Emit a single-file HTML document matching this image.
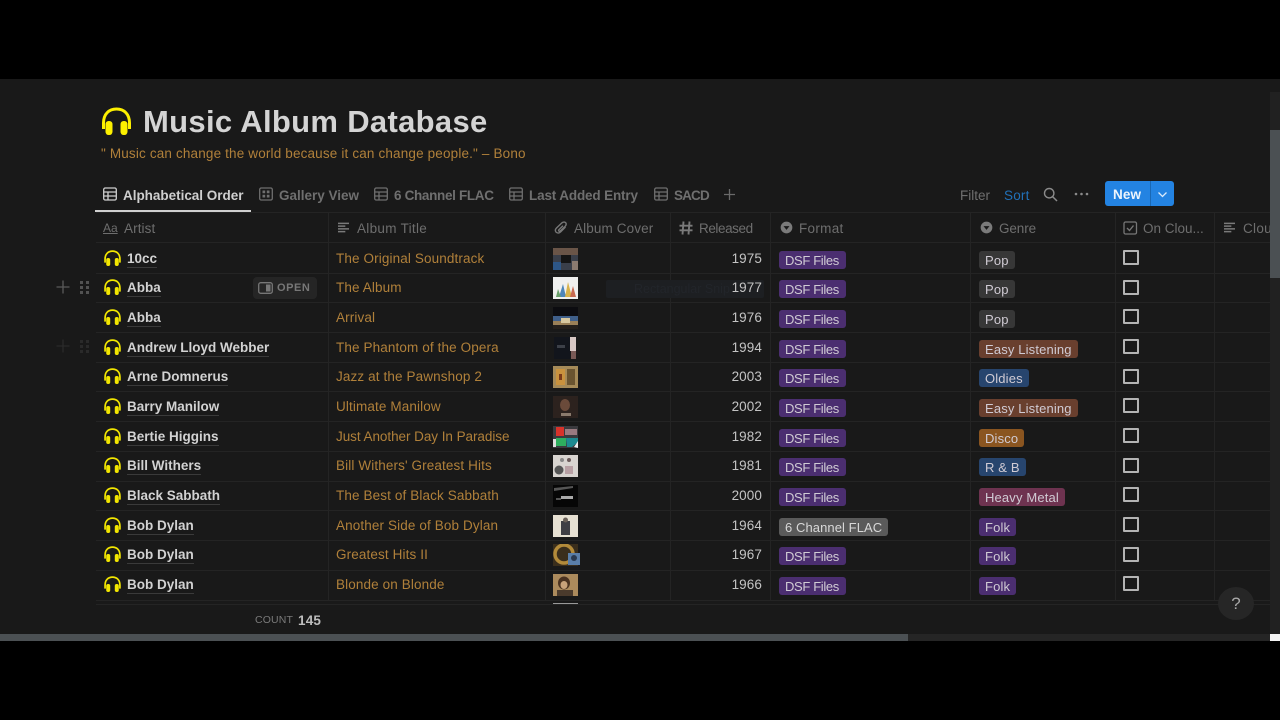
<!DOCTYPE html>
<html><head><meta charset="utf-8"><title>Music Album Database</title>
<style>
*{box-sizing:border-box}
html,body{margin:0;width:1280px;height:720px;overflow:hidden;background:#000;font-family:"Liberation Sans",sans-serif}
#p{position:absolute;left:0;top:79px;width:1280px;height:562px;background:#191919;overflow:hidden}
#w{position:absolute;left:0;top:0;width:1280px;height:720px;filter:blur(.25px)}
.a{position:absolute;white-space:nowrap}
.t{position:absolute;top:187px;font-size:13.5px;line-height:18px;color:#6f6f6f;font-weight:700;letter-spacing:0;white-space:nowrap}
.th{position:absolute;top:220px;font-size:13.5px;line-height:18px;color:#6e6e6e;letter-spacing:.25px;white-space:nowrap}
.l{position:absolute;background:#242424}
.r{position:absolute;left:96px;width:1174px;height:30px}
.r svg.h{position:absolute;left:7px;top:6px;width:19px;height:16px;color:#f2e600}
.n{position:absolute;left:31px;top:6px;font-size:13.5px;line-height:18px;font-weight:700;color:#d2d2d2;letter-spacing:0;border-bottom:1px solid #3a3a3a;height:18px;white-space:nowrap}
.b{position:absolute;left:240px;top:6px;font-size:13.5px;line-height:18px;color:#b0803a;letter-spacing:.12px;white-space:nowrap}
.c{position:absolute;left:457px;top:4px;width:25px;height:22px;display:block}
.y{position:absolute;right:508px;top:6px;font-size:13.5px;line-height:18px;color:#c4c4c4;letter-spacing:.1px}
.g{position:absolute;top:7px;height:18px;border-radius:3px;padding:0 6px;font-size:13px;line-height:19px;color:#d0cbd4;letter-spacing:.15px;white-space:nowrap}
.f{left:683px;background:#4b2e70;width:67px;letter-spacing:-.35px}
.s{left:883px}
.x{position:absolute;left:1027px;top:6.500px;width:16px;height:15px;border:2px solid #b4b4b4;border-radius:1px}
</style></head><body>
<svg width="0" height="0" style="position:absolute"><defs>
<symbol id="h" viewBox="0 0 33 28"><path d="M3.500 22V16C3.500 7 9 2 16.500 2S29.500 7 29.500 16V22" fill="none" stroke="currentColor" stroke-width="3"/><rect x="5.500" y="14" width="7" height="14" rx="3.200" fill="currentColor"/><rect x="20.500" y="14" width="7" height="14" rx="3.200" fill="currentColor"/></symbol>
<symbol id="ti" viewBox="0 0 14 14"><rect x=".7" y="1" width="12.600" height="12" rx="1.500" fill="none" stroke="currentColor" stroke-width="1.300"/><path d="M1 5H13M1 9H13M5 5V13" stroke="currentColor" stroke-width="1.300" fill="none"/></symbol>
<symbol id="ga" viewBox="0 0 14 14"><rect x=".7" y="1" width="12.600" height="12" rx="1.500" fill="none" stroke="currentColor" stroke-width="1.300"/><path d="M3.500 3.500H6.200V6.200H3.500ZM7.800 3.500H10.500V6.200H7.800ZM3.500 7.800H6.200V10.500H3.500ZM7.800 7.800H10.500V10.500H7.800Z" fill="currentColor"/></symbol>
<symbol id="tx" viewBox="0 0 14 12"><path d="M1 1.500H13M1 4.500H9M1 7.500H13M1 10.500H9" stroke="currentColor" stroke-width="1.600" fill="none"/></symbol>
<symbol id="dd" viewBox="0 0 14 14"><circle cx="7" cy="7" r="6.300" fill="currentColor"/><path d="M3.800 5.500H10.200L7 9.500Z" fill="#191919"/></symbol>
</defs></svg>
<div id="p"></div>
<div id="w">
<!-- scrollbars -->
<div class="a" style="left:1270px;top:92px;width:10px;height:542px;background:#212121"></div>
<div class="a" style="left:1270px;top:130px;width:10px;height:148px;background:#4b5053"></div>
<div class="a" style="left:0;top:634px;width:1270px;height:7px;background:#252525"></div>
<div class="a" style="left:0;top:634px;width:908px;height:7px;background:#4b5053"></div>
<div class="a" style="left:1270px;top:634px;width:10px;height:7px;background:#f4f4f4"></div>

<!-- title -->
<svg class="a" style="left:100px;top:107px;width:33px;height:28px;color:#fdf000"><use href="#h"/></svg>
<div class="a" style="left:143px;top:104px;font-size:31px;line-height:36px;font-weight:700;color:#d4d4d4;letter-spacing:.32px">Music Album Database</div>
<div class="a" style="left:101px;top:145px;font-size:13.500px;line-height:18px;color:#b0803a;letter-spacing:.16px">" Music can change the world because it can change people." – Bono</div>

<!-- tabs -->
<svg class="a" style="left:103px;top:187px;width:14px;height:14px;color:#cfcfcf"><use href="#ti"/></svg>
<div class="t" style="left:123px;color:#cfcfcf;letter-spacing:-.02px">Alphabetical Order</div>
<div class="a" style="left:95px;top:210px;width:156px;height:2px;background:#d0d0d0"></div>
<svg class="a" style="left:259px;top:187px;width:14px;height:14px;color:#6f6f6f"><use href="#ga"/></svg>
<div class="t" style="left:279px">Gallery View</div>
<svg class="a" style="left:374px;top:187px;width:14px;height:14px;color:#6f6f6f"><use href="#ti"/></svg>
<div class="t" style="left:394px;letter-spacing:-.33px">6 Channel FLAC</div>
<svg class="a" style="left:509px;top:187px;width:14px;height:14px;color:#6f6f6f"><use href="#ti"/></svg>
<div class="t" style="left:529px;letter-spacing:-.15px">Last Added Entry</div>
<svg class="a" style="left:654px;top:187px;width:14px;height:14px;color:#6f6f6f"><use href="#ti"/></svg>
<div class="t" style="left:674px;letter-spacing:-.85px">SACD</div>
<svg class="a" style="left:723px;top:188px;width:13px;height:13px"><path d="M6.500 1V12M1 6.500H12" stroke="#6a6a6a" stroke-width="1.300"/></svg>

<div class="a" style="left:960px;top:187px;font-size:13.500px;line-height:18px;color:#6f6f6f;letter-spacing:0">Filter</div>
<div class="a" style="left:1004px;top:187px;font-size:13.500px;line-height:18px;color:#2170b8;letter-spacing:.2px">Sort</div>
<svg class="a" style="left:1043px;top:187px;width:15px;height:15px"><circle cx="6.200" cy="6.200" r="4.700" fill="none" stroke="#8a8a8a" stroke-width="1.400"/><path d="M9.600 9.600L14 14" stroke="#8a8a8a" stroke-width="1.500"/></svg>
<svg class="a" style="left:1074px;top:191px;width:15px;height:6px"><circle cx="2" cy="3" r="1.300" fill="#8a8a8a"/><circle cx="7.500" cy="3" r="1.300" fill="#8a8a8a"/><circle cx="13" cy="3" r="1.300" fill="#8a8a8a"/></svg>
<div class="a" style="left:1105px;top:181px;width:69px;height:25px;border-radius:3px;background:#2383e2"></div>
<div class="a" style="left:1150px;top:181px;width:1px;height:25px;background:#1a68b4"></div>
<div class="a" style="left:1113px;top:186px;font-size:13.500px;line-height:18px;font-weight:700;color:#eef5fc;letter-spacing:.1px">New</div>
<svg class="a" style="left:1157px;top:191px;width:11px;height:7px"><path d="M1.500 1.500L5.500 5.500L9.500 1.500" fill="none" stroke="#dbeafa" stroke-width="1.300"/></svg>

<!-- grid lines -->
<div class="l" style="left:96px;top:212px;width:1174px;height:1px"></div>
<div class="l" style="left:328px;top:212px;width:1px;height:388px"></div>
<div class="l" style="left:545px;top:212px;width:1px;height:388px"></div>
<div class="l" style="left:670px;top:212px;width:1px;height:388px"></div>
<div class="l" style="left:770px;top:212px;width:1px;height:388px"></div>
<div class="l" style="left:970px;top:212px;width:1px;height:388px"></div>
<div class="l" style="left:1115px;top:212px;width:1px;height:388px"></div>
<div class="l" style="left:1214px;top:212px;width:1px;height:388px"></div>
<div class="l" style="left:96px;top:242px;width:1174px;height:1px"></div>
<div class="l" style="left:96px;top:273px;width:1174px;height:1px"></div>
<div class="l" style="left:96px;top:302px;width:1174px;height:1px"></div>
<div class="l" style="left:96px;top:332px;width:1174px;height:1px"></div>
<div class="l" style="left:96px;top:362px;width:1174px;height:1px"></div>
<div class="l" style="left:96px;top:391px;width:1174px;height:1px"></div>
<div class="l" style="left:96px;top:421px;width:1174px;height:1px"></div>
<div class="l" style="left:96px;top:451px;width:1174px;height:1px"></div>
<div class="l" style="left:96px;top:481px;width:1174px;height:1px"></div>
<div class="l" style="left:96px;top:510px;width:1174px;height:1px"></div>
<div class="l" style="left:96px;top:540px;width:1174px;height:1px"></div>
<div class="l" style="left:96px;top:570px;width:1174px;height:1px"></div>
<div class="l" style="left:96px;top:600px;width:1174px;height:1px"></div>
<div class="l" style="left:96px;top:604px;width:1174px;height:1px"></div>

<!-- header -->
<div class="a" style="left:103px;top:220px;font-size:12px;line-height:16px;color:#6e6e6e;text-decoration:underline;letter-spacing:0">Aa</div>
<div class="th" style="left:124px;letter-spacing:.1px">Artist</div>
<svg class="a" style="left:337px;top:222px;width:13px;height:11px;color:#7a7a7a"><use href="#tx"/></svg>
<div class="th" style="left:357px;letter-spacing:.3px">Album Title</div>
<svg class="a" style="left:554px;top:221px;width:14px;height:14px"><path d="M11.500 6L6.500 11C4.800 12.700 2.500 12 1.800 10.800C1 9.500 1.500 8 2.500 7L8 1.800C9.500 .5 11.500 1 12 2.200C12.500 3.500 12 4.500 11 5.500L6.200 10C5.300 10.800 4 9.700 4.800 8.800L9 4.800" fill="none" stroke="#777" stroke-width="1.400"/></svg>
<div class="th" style="left:574px;letter-spacing:.12px">Album Cover</div>
<svg class="a" style="left:679px;top:221px;width:14px;height:14px"><path d="M4.500 .5L3.500 13.500M10.500 .5L9.500 13.500M.5 4.700H13.500M.5 9.300H13.500" stroke="#7a7a7a" stroke-width="1.900" fill="none"/></svg>
<div class="th" style="left:699px;letter-spacing:-.42px">Released</div>
<svg class="a" style="left:780px;top:221px;width:13px;height:13px;color:#7a7a7a"><use href="#dd"/></svg>
<div class="th" style="left:799px;letter-spacing:.3px">Format</div>
<svg class="a" style="left:980px;top:221px;width:13px;height:13px;color:#7a7a7a"><use href="#dd"/></svg>
<div class="th" style="left:999px;letter-spacing:-.1px">Genre</div>
<svg class="a" style="left:1123px;top:221px;width:15px;height:14px"><rect x="1" y="1" width="12.500" height="12" rx="1.500" fill="none" stroke="#777" stroke-width="1.300"/><path d="M4 7L6.500 9.500L10.500 4.500" fill="none" stroke="#777" stroke-width="1.400"/></svg>
<div class="th" style="left:1143px;letter-spacing:0">On Clou...</div>
<svg class="a" style="left:1223px;top:222px;width:13px;height:11px;color:#7a7a7a"><use href="#tx"/></svg>
<div class="a" style="left:1243px;top:220px;width:27px;overflow:hidden;font-size:13.500px;line-height:18px;color:#6e6e6e;letter-spacing:.3px">Cloud</div>

<!-- hover controls -->
<svg class="a" style="left:56px;top:280px;width:14px;height:14px"><path d="M7 .5V13.500M.5 7H13.500" stroke="#5a5a5a" stroke-width="1.300"/></svg>
<svg class="a" style="left:80px;top:281px;width:9px;height:13px;fill:#525252"><rect x="0" y="0" width="3" height="3"/><rect x="6" y="0" width="3" height="3"/><rect x="0" y="5" width="3" height="3"/><rect x="6" y="5" width="3" height="3"/><rect x="0" y="10" width="3" height="3"/><rect x="6" y="10" width="3" height="3"/></svg>
<svg class="a" style="left:56px;top:339px;width:14px;height:14px"><path d="M7 .5V13.500M.5 7H13.500" stroke="#2a2a2a" stroke-width="1.300"/></svg>
<svg class="a" style="left:80px;top:340px;width:9px;height:13px;fill:#2a2a2a"><rect x="0" y="0" width="3" height="3"/><rect x="6" y="0" width="3" height="3"/><rect x="0" y="5" width="3" height="3"/><rect x="6" y="5" width="3" height="3"/><rect x="0" y="10" width="3" height="3"/><rect x="6" y="10" width="3" height="3"/></svg>
<div class="a" style="left:606px;top:280px;width:158px;height:18px;background:#1d1f22;border-radius:2px"></div>
<div class="a" style="left:634px;top:281px;font-size:12.500px;line-height:16px;color:#22252a">Rectangular Snip</div>

<!-- rows -->
<div class="r" style="top:243.5px"><svg class="h"><use href="#h"/></svg><div class="n">10cc</div><div class="b">The Original Soundtrack</div>
<svg class="c" viewBox="0 0 25 22"><rect width="25" height="22" fill="#3a3f4a"/><rect x="0" y="0" width="25" height="7" fill="#6a5548"/><rect x="8" y="7" width="10" height="8" fill="#151515"/><rect x="0" y="14" width="8" height="8" fill="#2d5687"/><rect x="19" y="13" width="6" height="9" fill="#8a7a70"/></svg>
<div class="y">1975</div><div class="g f">DSF Files</div><div class="g s" style="background:#373737">Pop</div><div class="x"></div></div>

<div class="r" style="top:273.2px"><svg class="h"><use href="#h"/></svg><div class="n">Abba</div>
<div class="a" style="left:157px;top:4px;width:64px;height:22px;background:#252525;border-radius:4px"></div>
<svg class="a" style="left:162px;top:9px;width:15px;height:12px"><rect x=".7" y=".7" width="13.600" height="10.600" rx="2" fill="none" stroke="#777" stroke-width="1.300"/><rect x="8" y="2.500" width="4.500" height="7" fill="#777"/></svg>
<div class="a" style="left:181px;top:7px;font-size:11px;line-height:16px;font-weight:700;color:#777;letter-spacing:.55px">OPEN</div>
<div class="b">The Album</div>
<svg class="c" viewBox="0 0 25 22"><rect width="25" height="22" fill="#f0f0ee"/><path d="M6 20L10 7L13 20Z" fill="#4f86b8"/><path d="M12 20L15 5L19 20Z" fill="#d8b24a"/><path d="M3 20L5 12L8 20Z" fill="#6aa06a"/><path d="M17 20L20 9L23 20Z" fill="#c86a50"/></svg>
<div class="y">1977</div><div class="g f">DSF Files</div><div class="g s" style="background:#373737">Pop</div><div class="x"></div></div>

<div class="r" style="top:302.8px"><svg class="h"><use href="#h"/></svg><div class="n">Abba</div><div class="b">Arrival</div>
<svg class="c" viewBox="0 0 25 22"><rect width="25" height="22" fill="#0c0c10"/><rect x="0" y="9" width="25" height="5" fill="#3f5f8a"/><rect x="0" y="14" width="25" height="4" fill="#9a8058"/><rect x="8" y="11" width="9" height="5" fill="#d8c8a0"/><rect x="0" y="18" width="25" height="4" fill="#25201c"/></svg>
<div class="y">1976</div><div class="g f">DSF Files</div><div class="g s" style="background:#373737">Pop</div><div class="x"></div></div>

<div class="r" style="top:332.5px"><svg class="h"><use href="#h"/></svg><div class="n">Andrew Lloyd Webber</div><div class="b">The Phantom of the Opera</div>
<svg class="c" viewBox="0 0 25 22"><rect width="25" height="22" fill="#191919"/><rect x="1" y="0" width="16" height="22" fill="#12151c"/><rect x="4" y="8" width="8" height="3" fill="#3c4048"/><rect x="17" y="0" width="6" height="14" fill="#d8c8c4"/><rect x="18" y="14" width="5" height="8" fill="#7a5a56"/></svg>
<div class="y">1994</div><div class="g f">DSF Files</div><div class="g s" style="background:#693f2e">Easy Listening</div><div class="x"></div></div>

<div class="r" style="top:362.2px"><svg class="h"><use href="#h"/></svg><div class="n">Arne Domnerus</div><div class="b">Jazz at the Pawnshop 2</div>
<svg class="c" viewBox="0 0 25 22"><rect width="25" height="22" fill="#a58a58"/><rect x="3" y="3" width="9" height="16" fill="#c9923e"/><rect x="6" y="8" width="3" height="6" fill="#7a3a1a"/><rect x="14" y="3" width="8" height="16" fill="#6a5430"/></svg>
<div class="y">2003</div><div class="g f">DSF Files</div><div class="g s" style="background:#27456e">Oldies</div><div class="x"></div></div>

<div class="r" style="top:391.8px"><svg class="h"><use href="#h"/></svg><div class="n">Barry Manilow</div><div class="b">Ultimate Manilow</div>
<svg class="c" viewBox="0 0 25 22"><rect width="25" height="22" fill="#2c221e"/><ellipse cx="12" cy="9" rx="5" ry="6" fill="#6a4a3a"/><rect x="8" y="17" width="10" height="3" fill="#8a7a6c"/></svg>
<div class="y">2002</div><div class="g f">DSF Files</div><div class="g s" style="background:#693f2e">Easy Listening</div><div class="x"></div></div>

<div class="r" style="top:421.5px"><svg class="h"><use href="#h"/></svg><div class="n">Bertie Higgins</div><div class="b" style="letter-spacing:-.05px">Just Another Day In Paradise</div>
<svg class="c" viewBox="0 0 25 22"><rect width="25" height="22" fill="#3a3a3e"/><rect x="3" y="1" width="8" height="9" fill="#d8322a"/><rect x="3" y="12" width="10" height="8" fill="#2eae5e"/><path d="M13 12H25V16L19 21H14Z" fill="#1c8a90"/><rect x="12" y="3" width="12" height="6" fill="#9a7a80"/><path d="M21 21L25 15V22Z" fill="#eee"/><rect x="0" y="13" width="3" height="8" fill="#ddd"/></svg>
<div class="y">1982</div><div class="g f">DSF Files</div><div class="g s" style="background:#8a5520">Disco</div><div class="x"></div></div>

<div class="r" style="top:451.2px"><svg class="h"><use href="#h"/></svg><div class="n">Bill Withers</div><div class="b">Bill Withers' Greatest Hits</div>
<svg class="c" viewBox="0 0 25 22"><rect width="25" height="22" fill="#d8d4d0"/><circle cx="6" cy="15" r="4.500" fill="#555"/><rect x="12" y="11" width="8" height="8" fill="#b8a0a4"/><circle cx="9" cy="5" r="2" fill="#888"/><circle cx="16" cy="5" r="2" fill="#6a5a5a"/></svg>
<div class="y">1981</div><div class="g f">DSF Files</div><div class="g s" style="background:#27456e">R &amp; B</div><div class="x"></div></div>

<div class="r" style="top:480.8px"><svg class="h"><use href="#h"/></svg><div class="n">Black Sabbath</div><div class="b">The Best of Black Sabbath</div>
<svg class="c" viewBox="0 0 25 22"><rect width="25" height="22" fill="#060606"/><path d="M1 3L20 1V3L1 6Z" fill="#555"/><rect x="8" y="11" width="12" height="3" fill="#aaa"/><rect x="3" y="13" width="5" height="2" fill="#555"/></svg>
<div class="y">2000</div><div class="g f">DSF Files</div><div class="g s" style="background:#6e3350">Heavy Metal</div><div class="x"></div></div>

<div class="r" style="top:510.5px"><svg class="h"><use href="#h"/></svg><div class="n">Bob Dylan</div><div class="b">Another Side of Bob Dylan</div>
<svg class="c" viewBox="0 0 25 22"><rect width="25" height="22" fill="#e6e0d2"/><rect x="8" y="6" width="9" height="14" fill="#3e3e44"/><circle cx="12.500" cy="5" r="2.500" fill="#6a6058"/></svg>
<div class="y">1964</div><div class="g" style="left:683px;background:#5a5a5a;color:#d8d8d8;letter-spacing:.08px">6 Channel FLAC</div><div class="g s" style="background:#4b2e70">Folk</div><div class="x"></div></div>

<div class="r" style="top:540.2px"><svg class="h"><use href="#h"/></svg><div class="n">Bob Dylan</div><div class="b">Greatest Hits II</div>
<svg class="c" style="width:28px" viewBox="0 0 28 22"><rect width="25" height="22" fill="#3a2e1c"/><circle cx="11" cy="10" r="9" fill="none" stroke="#b28a3a" stroke-width="3.500"/><rect x="15" y="9" width="12" height="12" fill="#5a7ea8"/><circle cx="21" cy="14" r="3" fill="#2a3a50"/></svg>
<div class="y">1967</div><div class="g f">DSF Files</div><div class="g s" style="background:#4b2e70">Folk</div><div class="x"></div></div>

<div class="r" style="top:569.8px"><svg class="h"><use href="#h"/></svg><div class="n">Bob Dylan</div><div class="b">Blonde on Blonde</div>
<svg class="c" viewBox="0 0 25 22"><rect width="25" height="22" fill="#ab8a5c"/><ellipse cx="11" cy="9" rx="6" ry="6.500" fill="#4a3220"/><ellipse cx="11" cy="11" rx="3.500" ry="4" fill="#c8a27a"/><rect x="4" y="16" width="16" height="6" fill="#4a3a2c"/></svg>
<div class="y">1966</div><div class="g f">DSF Files</div><div class="g s" style="background:#4b2e70">Folk</div><div class="x"></div></div>

<div class="a" style="left:553px;top:603px;width:25px;height:1px;background:#999"></div>

<!-- footer -->
<div class="a" style="left:255px;top:613px;font-size:10.500px;line-height:15px;color:#7a7a7a;letter-spacing:.15px">COUNT</div>
<div class="a" style="left:298px;top:612px;font-size:13.500px;line-height:17px;font-weight:700;color:#bdbdbd;letter-spacing:.2px">145</div>

<div class="a" style="left:1218px;top:587px;width:36px;height:33px;border-radius:50%;background:#262626;color:#a8a8a8;font-size:17px;line-height:33px;text-align:center">?</div>
</div>
</body></html>
